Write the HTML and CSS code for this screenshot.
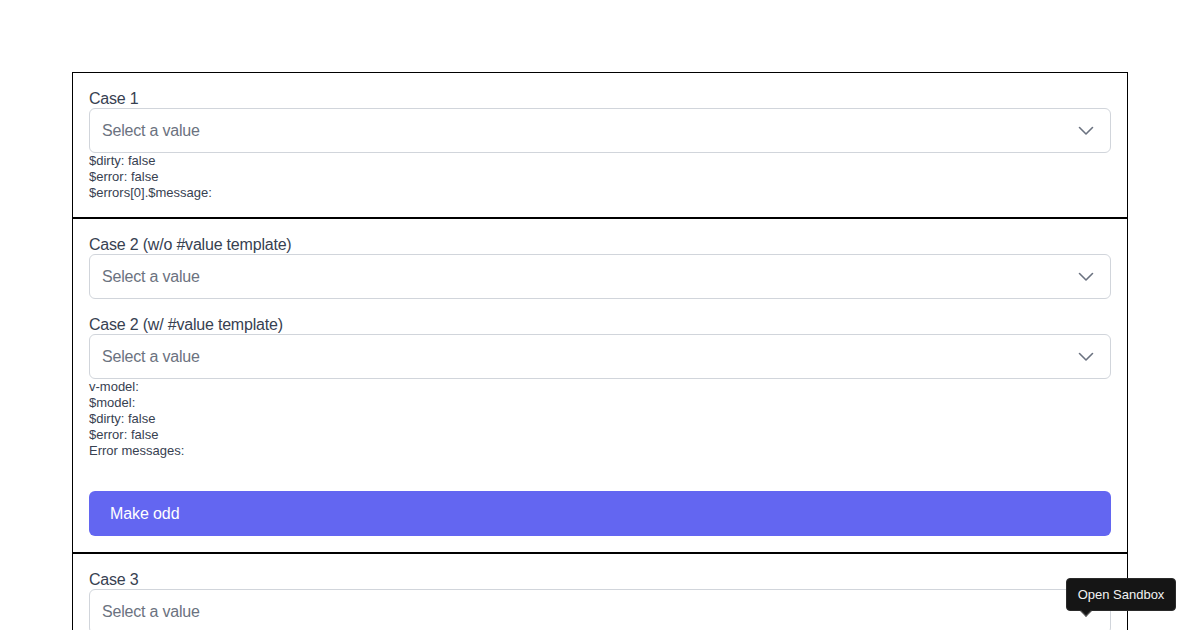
FILE: index.html
```html
<!DOCTYPE html>
<html>
<head>
<meta charset="utf-8">
<link rel="stylesheet" href="styles.css">
</head>
<body>
<div class="container">
  <section class="case">
    <label class="label">Case 1</label>
    <div class="select"><span class="placeholder">Select a value</span><svg class="chev" width="16" height="10" viewBox="0 0 16 10"><path d="M1.5 1.5 L8 8 L14.5 1.5" fill="none" stroke="#6b7280" stroke-width="1.6" stroke-linecap="round" stroke-linejoin="round"/></svg></div>
    <div class="debug">
      <div>$dirty: false</div>
      <div>$error: false</div>
      <div>$errors[0].$message:</div>
    </div>
  </section>
  <section class="case">
    <label class="label">Case 2 (w/o #value template)</label>
    <div class="select"><span class="placeholder">Select a value</span><svg class="chev" width="16" height="10" viewBox="0 0 16 10"><path d="M1.5 1.5 L8 8 L14.5 1.5" fill="none" stroke="#6b7280" stroke-width="1.6" stroke-linecap="round" stroke-linejoin="round"/></svg></div>
    <label class="label spaced">Case 2 (w/ #value template)</label>
    <div class="select"><span class="placeholder">Select a value</span><svg class="chev" width="16" height="10" viewBox="0 0 16 10"><path d="M1.5 1.5 L8 8 L14.5 1.5" fill="none" stroke="#6b7280" stroke-width="1.6" stroke-linecap="round" stroke-linejoin="round"/></svg></div>
    <div class="debug">
      <div>v-model:</div>
      <div>$model:</div>
      <div>$dirty: false</div>
      <div>$error: false</div>
      <div>Error messages:</div>
    </div>
    <button class="btn">Make odd</button>
  </section>
  <section class="case">
    <label class="label">Case 3</label>
    <div class="select"><span class="placeholder">Select a value</span><svg class="chev" width="16" height="10" viewBox="0 0 16 10"><path d="M1.5 1.5 L8 8 L14.5 1.5" fill="none" stroke="#6b7280" stroke-width="1.6" stroke-linecap="round" stroke-linejoin="round"/></svg></div>
    <div class="debug">
      <div>$dirty: false</div>
      <div>$error: false</div>
    </div>
  </section>
</div>
<div class="sandbox-tip">Open Sandbox<span class="tip-arrow"></span></div>
</body>
</html>
```

FILE: styles.css
```css
* { box-sizing: border-box; }
html, body { margin: 0; padding: 0; background: #fff; }
body {
  font-family: "Liberation Sans", Arial, sans-serif;
  color: #374151;
  overflow: hidden;
}
.container {
  margin: 72px 72px 0 72px;
  width: 1056px;
}
.case {
  border: 1px solid #000;
  padding: 16px;
  display: flex;
  flex-direction: column;
}
.label {
  display: block;
  font-size: 16px;
  line-height: 19px;
  letter-spacing: -0.2px;
  color: #374151;
}
.label.spaced { margin-top: 16px; }
.select {
  height: 45px;
  border: 1px solid #d1d5db;
  border-radius: 6px;
  display: flex;
  align-items: center;
  justify-content: space-between;
  padding: 0 16px 0 12px;
}
.placeholder {
  font-size: 16px;
  letter-spacing: -0.2px;
  color: #6b7280;
}
.chev { display: block; margin-top: 1px; }
.debug {
  font-size: 13px;
  line-height: 16px;
  color: #374151;
}
.btn {
  margin-top: 32px;
  height: 45px;
  border: none;
  border-radius: 6px;
  background: #6366f1;
  color: #fff;
  font-family: "Liberation Sans", Arial, sans-serif;
  font-size: 16px;
  letter-spacing: -0.1px;
  text-align: left;
  padding: 0 21px;
}
.sandbox-tip {
  position: fixed;
  right: 24px;
  bottom: 19px;
  width: 110px;
  height: 33px;
  background: #151515;
  border: 1px solid #2a2a2a;
  border-radius: 4px;
  color: #f2f2f2;
  font-size: 13px;
  line-height: 31px;
  text-align: center;
}
.tip-arrow {
  position: absolute;
  left: 15px;
  bottom: -5px;
  width: 8px;
  height: 8px;
  background: #151515;
  border-right: 1px solid #555;
  border-bottom: 1px solid #555;
  transform: rotate(45deg);
}
```
